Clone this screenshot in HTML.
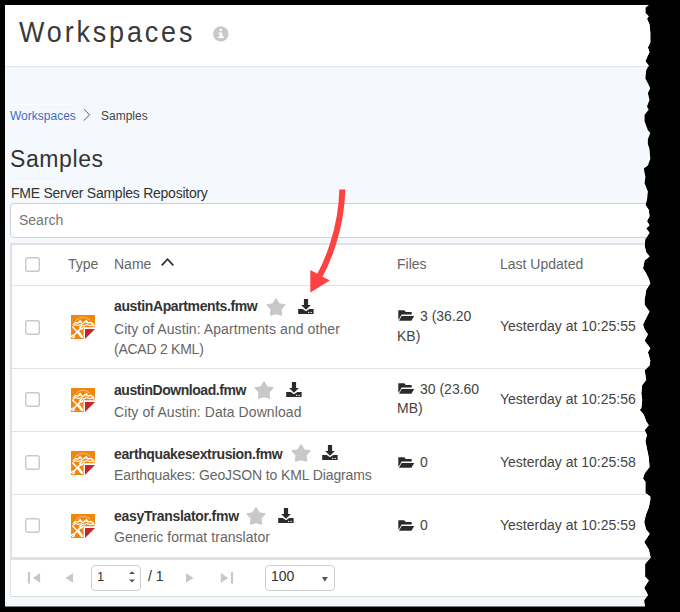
<!DOCTYPE html>
<html><head><meta charset="utf-8">
<style>
html,body{margin:0;padding:0;background:#000;width:680px;height:612px;overflow:hidden}
*{box-sizing:border-box}
#wrap{position:absolute;left:0;top:0;width:680px;height:612px;clip-path:polygon(5px 5px,648.7px 5.0px,645.4px 7.4px,645.4px 13.0px,648.7px 16.3px,647.0px 18.8px,649.5px 24.5px,650.3px 32.7px,650.3px 42.5px,647.9px 47.4px,649.5px 52.3px,647.0px 57.2px,645.4px 61.3px,648.7px 65.4px,646.2px 70.3px,645.4px 78.4px,647.9px 83.3px,650.3px 88.2px,647.9px 93.1px,649.5px 100.0px,647.0px 106.5px,648.7px 109.8px,644.6px 114.7px,644.6px 121.2px,647.9px 130.2px,650.3px 132.7px,647.9px 139.2px,647.9px 144.1px,649.5px 149.0px,650.3px 158.8px,647.9px 165.4px,643.8px 168.6px,645.4px 176.8px,644.6px 183.3px,647.9px 191.5px,647.0px 200.0px,645.4px 204.9px,648.7px 209.8px,649.5px 216.3px,647.0px 221.2px,649.5px 225.3px,646.2px 228.6px,649.5px 232.7px,645.4px 239.2px,644.6px 245.8px,646.2px 252.3px,649.5px 256.4px,644.6px 260.5px,643.0px 268.6px,645.4px 271.9px,648.7px 278.4px,650.3px 283.3px,646.2px 289.9px,644.6px 300.0px,644.6px 304.9px,649.5px 311.4px,646.2px 318.0px,643.0px 324.5px,644.6px 329.4px,647.9px 334.3px,644.6px 340.8px,650.3px 348.2px,647.9px 352.3px,650.3px 360.5px,649.5px 365.4px,644.6px 370.3px,646.2px 380.1px,642.2px 385.0px,641.3px 393.1px,642.2px 400.0px,641.3px 408.2px,639.7px 409.8px,643.8px 414.7px,646.2px 421.2px,648.7px 425.3px,644.6px 430.2px,647.0px 435.1px,645.4px 440.8px,647.0px 449.0px,648.7px 457.2px,649.5px 467.0px,644.6px 473.5px,643.0px 478.4px,645.4px 481.7px,645.4px 493.1px,650.3px 496.4px,650.3px 500.0px,648.8px 507.3px,646.0px 514.6px,644.2px 521.9px,646.0px 529.3px,649.7px 533.8px,644.2px 542.0px,648.8px 549.4px,650.6px 557.6px,645.1px 564.0px,645.1px 576.8px,648.8px 580.4px,644.2px 587.8px,647.9px 595.1px,644.2px 600.5px,645.1px 606.5px,5px 606.5px);background:#f5f9fe;font-family:"Liberation Sans",sans-serif;color:#333}
.a{position:absolute;white-space:nowrap;line-height:20px;font-size:14px}
.b{font-weight:bold;letter-spacing:-0.38px;color:#333}
.d{color:#666}
.box{position:absolute}
svg{position:absolute;overflow:visible}
</style></head><body>
<div id="wrap">
<svg width="0" height="0" style="position:absolute">
<defs>
<symbol id="star" viewBox="0 0 20 18"><polygon points="10.05,0.7 13.1,5.7 19.1,6.9 15.1,11.1 15.6,17.1 10.05,15.6 4.5,17.1 5,11.1 1,6.9 6.8,5.7" fill="#c8c8c8" stroke="#c8c8c8" stroke-width="1.1" stroke-linejoin="round"/></symbol>
<symbol id="dl" viewBox="0 0 16 15"><path d="M5.9 0h4.2v5.9h2.8L8 10.8 3.1 5.9h2.8z" fill="#2b2b2b"/><path d="M0.2 9.9h4.5l3.3 2.3 3.3-2.3h4.3v5H0.2z" fill="#2b2b2b"/><circle cx="10.7" cy="13.4" r="0.7" fill="#fff"/><circle cx="13.2" cy="13.4" r="0.7" fill="#fff"/></symbol>
<symbol id="fold" viewBox="0 0 17 11"><path d="M0.3 0.4Q0.3 0.2 0.6 0.2H6.2L7.9 2H13.4Q13.7 2 13.7 2.3V4.5H3.6L0.9 9.2H0.3z" fill="#2b2b2b"/><path d="M3.6 5.9H16.2L13.4 10.7H1z" fill="#2b2b2b"/></symbol>
<symbol id="cb" viewBox="0 0 15 15"><rect x="0.75" y="0.75" width="13.5" height="13.5" rx="1.8" fill="#fff" stroke="#c9c9c9" stroke-width="1.4"/></symbol>
<symbol id="fme" viewBox="0 0 24 24">
<clipPath id="fmeclip"><path d="M0 0H24V12.2H12.6V24H0z"/></clipPath>
<path d="M0 0H24V12.2H12.6V24H0z" fill="#f0870f"/>
<path d="M14 14H24L14 24z" fill="#c4262e"/>
<g clip-path="url(#fmeclip)">
<path d="M4.9 5.6Q12 -0.8 19.1 5.3" fill="none" stroke="#fff" stroke-width="0.75" stroke-dasharray="0.9 0.6"/>
<path d="M9.1 4.6L11 7H7.2z M15.3 4.6L17.2 7H13.4z" fill="#fff"/>
<path d="M2.1 10L4.4 7.4 6.8 8.2 9.1 6.6 11.8 8.8 14.4 6.6 17.4 8 19.7 7.4 22.4 9.1 22.8 10.8" fill="none" stroke="#fff" stroke-width="1.3" stroke-linejoin="round"/>
<path d="M1.5 11.6L4.5 9.6 7.5 10.6 10 9.6 12.6 11.2 15.6 9.4 18.5 10.6 21 10 23.8 11.2" fill="none" stroke="#fff" stroke-width="1.1" stroke-linejoin="round"/>
<path d="M15.6 8.6L16.6 9.9H14.6z" fill="#fff"/>
<path d="M2.2 21.0L10.2 13" stroke="#fff" stroke-width="1.7"/>
<circle cx="10.4" cy="12.6" r="2.1" fill="#fff"/>
<path d="M10.4 12.6L12 11" stroke="#f0870f" stroke-width="1"/>
<circle cx="1.9" cy="21.3" r="1.9" fill="#fff"/>
<path d="M1.9 21.3L0.5 22.7" stroke="#f0870f" stroke-width="1"/>
<path d="M1.5 12L7.4 17.8" stroke="#fff" stroke-width="1.6"/>
<path d="M7.6 17.6L10.8 21.8" stroke="#fff" stroke-width="2.6" stroke-linecap="round"/>
</g>
</symbol>
</defs></svg>

<!-- header -->
<div class="box" style="left:5px;top:5px;width:660px;height:62px;background:#fff;border-bottom:1px solid #e2e4e8"></div>
<div class="a" style="left:19px;top:12px;font-size:29px;line-height:40px;letter-spacing:3.05px;color:#3a3a3a;transform:scaleX(0.93);transform-origin:0 0">Workspaces</div>
<svg style="left:213px;top:26px" width="16" height="16" viewBox="0 0 16 16"><circle cx="7.8" cy="7.9" r="7.7" fill="#c8c8c8"/><circle cx="7.8" cy="4.0" r="1.3" fill="#fff"/><path d="M5.6 6.6H9.3V10.5H10.9V11.9H5.0V10.5H6.6V8.0H5.6z" fill="#fff"/></svg>

<!-- breadcrumb -->
<div class="box" style="left:11px;top:104px;width:63px;height:1px;background:#fdfeff"></div>
<div class="box" style="left:11px;top:181px;width:46px;height:1px;background:#fdfeff"></div>
<div class="a" style="left:10px;top:106px;font-size:12px;color:#3f6bc5">Workspaces</div>
<svg style="left:83px;top:108px" width="8" height="13" viewBox="0 0 8 13"><path d="M0.9 1.2L6.7 6.8 0.7 12.6" fill="none" stroke="#5a5a5a" stroke-width="1"/></svg>
<div class="a" style="left:101px;top:106px;font-size:12px;color:#444">Samples</div>

<!-- title -->
<div class="a" style="left:10px;top:146px;font-size:23px;line-height:26px;letter-spacing:0.6px;color:#333">Samples</div>
<div class="a" style="left:11px;top:183px;font-size:14px;letter-spacing:-0.25px;color:#333">FME Server Samples Repository</div>

<!-- search -->
<div class="box" style="left:10px;top:203px;width:660px;height:35px;background:#fff;border:1px solid #cdd0d5;border-radius:4px"></div>
<div class="a" style="left:19px;top:210px;color:#757575">Search</div>

<!-- table -->
<div class="box" style="left:10px;top:243px;width:660px;height:317px;background:#fff;border:2px solid #e1e1e1;border-right:none;border-bottom:none"></div>
<div class="box" style="left:10px;top:560px;width:660px;height:37px;background:#fff;border-left:1px solid #e1e1e1;border-bottom:1px solid #dcdcdc"></div>
<div class="box" style="left:12px;top:285px;width:660px;height:1px;background:#e3e3e3"></div>
<div class="box" style="left:12px;top:368px;width:660px;height:1px;background:#e3e3e3"></div>
<div class="box" style="left:12px;top:431px;width:660px;height:1px;background:#e3e3e3"></div>
<div class="box" style="left:12px;top:494px;width:660px;height:1px;background:#e3e3e3"></div>
<div class="box" style="left:12px;top:557px;width:660px;height:3px;background:#e1e1e1"></div>

<!-- header row -->
<svg style="left:25px;top:257px" width="15" height="15"><use href="#cb"/></svg>
<div class="a" style="left:68px;top:254px;color:#666">Type</div>
<div class="a" style="left:114px;top:254px;color:#666">Name</div>
<svg style="left:161px;top:258px" width="14" height="9" viewBox="0 0 14 9"><path d="M0.8 7.3L6.5 1.2 12.3 7.3" fill="none" stroke="#2f2f2f" stroke-width="1.7"/></svg>
<div class="a" style="left:397px;top:254px;color:#666">Files</div>
<div class="a" style="left:500px;top:254px;color:#666">Last Updated</div>

<!-- row 1 -->
<svg style="left:25px;top:320px" width="15" height="15"><use href="#cb"/></svg>
<svg style="left:71px;top:315px" width="24" height="24"><use href="#fme"/></svg>
<div class="a b" style="left:114px;top:296px">austinApartments.fmw</div>
<svg style="left:266px;top:298px" width="20" height="18"><use href="#star"/></svg>
<svg style="left:298.1px;top:299px" width="16" height="15"><use href="#dl"/></svg>
<div class="a d" style="left:114px;top:319px;letter-spacing:0.07px">City of Austin: Apartments and other</div>
<div class="a d" style="left:114px;top:339px;letter-spacing:-0.25px">(ACAD 2 KML)</div>
<svg style="left:397.5px;top:310px" width="17" height="11"><use href="#fold"/></svg>
<div class="a" style="left:420px;top:306px;color:#444">3 (36.20</div>
<div class="a" style="left:397px;top:326px;color:#444">KB)</div>
<div class="a" style="left:500px;top:316px;color:#444">Yesterday at 10:25:55</div>

<!-- row 2 -->
<svg style="left:25px;top:392px" width="15" height="15"><use href="#cb"/></svg>
<svg style="left:71px;top:388px" width="24" height="24"><use href="#fme"/></svg>
<div class="a b" style="left:114px;top:380px;letter-spacing:-0.45px">austinDownload.fmw</div>
<svg style="left:254px;top:381px" width="20" height="18"><use href="#star"/></svg>
<svg style="left:286px;top:382px" width="16" height="15"><use href="#dl"/></svg>
<div class="a d" style="left:114px;top:402px;letter-spacing:0.08px">City of Austin: Data Download</div>
<svg style="left:397.5px;top:383px" width="17" height="11"><use href="#fold"/></svg>
<div class="a" style="left:420px;top:379px;color:#444">30 (23.60</div>
<div class="a" style="left:397px;top:398px;color:#444">MB)</div>
<div class="a" style="left:500px;top:389px;color:#444">Yesterday at 10:25:56</div>

<!-- row 3 -->
<svg style="left:25px;top:455px" width="15" height="15"><use href="#cb"/></svg>
<svg style="left:71px;top:451px" width="24" height="24"><use href="#fme"/></svg>
<div class="a b" style="left:114px;top:444px">earthquakesextrusion.fmw</div>
<svg style="left:291px;top:444px" width="20" height="18"><use href="#star"/></svg>
<svg style="left:322.4px;top:445px" width="16" height="15"><use href="#dl"/></svg>
<div class="a d" style="left:114px;top:465px;letter-spacing:-0.11px">Earthquakes: GeoJSON to KML Diagrams</div>
<svg style="left:397.5px;top:457px" width="17" height="11"><use href="#fold"/></svg>
<div class="a" style="left:420px;top:452px;color:#444">0</div>
<div class="a" style="left:500px;top:452px;color:#444">Yesterday at 10:25:58</div>

<!-- row 4 -->
<svg style="left:25px;top:518px" width="15" height="15"><use href="#cb"/></svg>
<svg style="left:71px;top:514px" width="24" height="24"><use href="#fme"/></svg>
<div class="a b" style="left:114px;top:506px;letter-spacing:-0.29px">easyTranslator.fmw</div>
<svg style="left:246px;top:507px" width="20" height="18"><use href="#star"/></svg>
<svg style="left:277.6px;top:508px" width="16" height="15"><use href="#dl"/></svg>
<div class="a d" style="left:114px;top:527px;letter-spacing:0.05px">Generic format translator</div>
<svg style="left:397.5px;top:520px" width="17" height="11"><use href="#fold"/></svg>
<div class="a" style="left:420px;top:515px;color:#444">0</div>
<div class="a" style="left:500px;top:515px;color:#444">Yesterday at 10:25:59</div>

<!-- pagination -->
<svg style="left:27px;top:572px" width="14" height="12" viewBox="0 0 14 12"><rect x="0.9" y="0" width="2.2" height="11.6" fill="#c8c8c8"/><path d="M5.8 5.9L13.1 1v9.8z" fill="#c8c8c8"/></svg>
<svg style="left:65px;top:572px" width="9" height="12" viewBox="0 0 9 12"><path d="M0.5 5.9L8 1v9.8z" fill="#c8c8c8"/></svg>
<div class="box" style="left:91px;top:565px;width:50px;height:26px;background:#fff;border:1px solid #cfcfcf;border-radius:4px"></div>
<div class="a" style="left:97px;top:567px;font-size:13px;color:#333">1</div>
<svg style="left:128px;top:571px" width="8" height="12" viewBox="0 0 8 12"><path d="M1 3L4 0.3 7 3z" fill="#555"/><path d="M1 8.6L4 11.4 7 8.6z" fill="#555"/></svg>
<div class="a" style="left:148px;top:566px;font-size:14px;color:#333">/ 1</div>
<svg style="left:185px;top:572px" width="9" height="12" viewBox="0 0 9 12"><path d="M8.5 5.9L1 1v9.8z" fill="#c8c8c8"/></svg>
<svg style="left:220px;top:572px" width="14" height="12" viewBox="0 0 14 12"><path d="M8.2 5.9L0.9 1v9.8z" fill="#c8c8c8"/><rect x="10.9" y="0" width="2.2" height="11.6" fill="#c8c8c8"/></svg>
<div class="box" style="left:265px;top:565px;width:70px;height:26px;background:#fff;border:1px solid #cfcfcf;border-radius:4px"></div>
<div class="a" style="left:271px;top:566px;font-size:14px;color:#333">100</div>
<svg style="left:321px;top:576px" width="8" height="6" viewBox="0 0 8 6"><path d="M1 1h5.8L3.9 5.7z" fill="#555"/></svg>

<!-- red arrow -->
<svg style="left:0;top:0" width="680" height="612" viewBox="0 0 680 612"><path d="M342.3 189.5C341.5 230.7 325.9 264.8 319 277" fill="none" stroke="#ff4141" stroke-width="6"/><path d="M310.3 270.1L329.8 280.4L310.3 292.4z" fill="#ff4141"/></svg>

</div>
</body></html>
